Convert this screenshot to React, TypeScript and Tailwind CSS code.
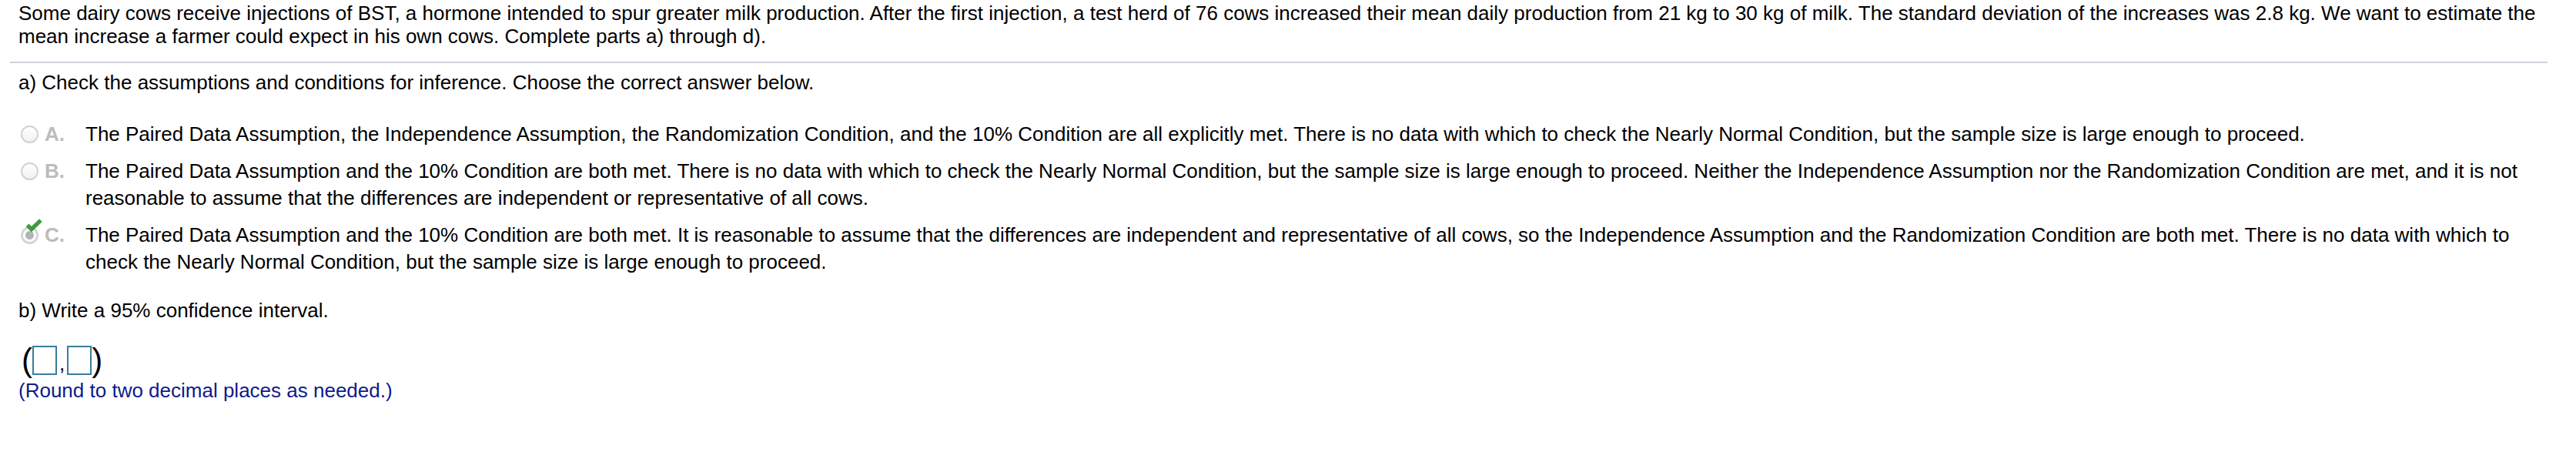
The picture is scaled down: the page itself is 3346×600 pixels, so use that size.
const options = [
  {
    letter: 'A.',
    text: 'The Paired Data Assumption, the Independence Assumption, the Randomization Condition, and the 10% Condition are all explicitly met. There is no data with which to check the Nearly Normal Condition, but the sample size is large enough to proceed.',
    selected: false,
  },
  {
    letter: 'B.',
    text: 'The Paired Data Assumption and the 10% Condition are both met. There is no data with which to check the Nearly Normal Condition, but the sample size is large enough to proceed. Neither the Independence Assumption nor the Randomization Condition are met, and it is not reasonable to assume that the differences are independent or representative of all cows.',
    selected: false,
  },
  {
    letter: 'C.',
    text: 'The Paired Data Assumption and the 10% Condition are both met. It is reasonable to assume that the differences are independent and representative of all cows, so the Independence Assumption and the Randomization Condition are both met. There is no data with which to check the Nearly Normal Condition, but the sample size is large enough to proceed.',
    selected: true,
  },
]

function Radio({ selected }: { selected: boolean }) {
  if (!selected) {
    return (
      <span className="block h-[23px] w-[23px] rounded-full border-2 border-[#d2d2d2] bg-gradient-to-b from-white to-[#f1f1f1]" />
    )
  }
  return (
    <span className="relative block h-[23px] w-[23px]">
      <span className="flex h-full w-full items-center justify-center rounded-full border-[3px] border-[#d6d6d6] bg-white">
        <span className="h-[11px] w-[11px] rounded-full bg-[#b4b4b4]" />
      </span>
      {/* green check over the radio */}
      <svg
        viewBox="0 0 20 17"
        className="absolute left-[7px] top-[-10px] h-[18px] w-[21px]"
      >
        <path
          d="M1.5 8 L6.5 13 L18 2"
          fill="none"
          stroke="#3f9b3f"
          strokeWidth="5"
          strokeLinejoin="miter"
        />
      </svg>
    </span>
  )
}

export default function App() {
  return (
    <div className="h-[600px] w-[3346px] overflow-hidden bg-white pt-[2px] font-['Liberation_Sans',Arial,sans-serif] text-[26px] text-black">
      <p className="pl-[24px] pr-[36px] leading-[30px]">
        Some dairy cows receive injections of BST, a hormone intended to spur greater milk production. After the first injection, a test herd of 76 cows increased their mean daily production from 21 kg to 30 kg of milk. The standard deviation of the increases was 2.8 kg. We want to estimate the mean increase a farmer could expect in his own cows. Complete parts a) through d).
      </p>
      <div className="ml-[13px] mr-[37px] mt-[18px] h-[2px] bg-[#cdd2db]" />

      <p className="mt-[10px] pl-[24px] leading-[30px]">
        a) Check the assumptions and conditions for inference. Choose the correct answer below.
      </p>

      <div className="mt-[35px] flex flex-col gap-[13px]">
        {options.map((o) => (
          <div key={o.letter} className="flex items-start leading-[35px]">
            <div className="flex h-[35px] w-[58px] shrink-0 items-center justify-end pr-[8px]">
              <Radio selected={o.selected} />
            </div>
            <span className="w-[53px] shrink-0 font-bold text-[#bcbcbc]">{o.letter}</span>
            <span className="flex-1 pr-[36px]">{o.text}</span>
          </div>
        ))}
      </div>

      <p className="mt-[30px] pl-[24px] leading-[30px]">b) Write a 95% confidence interval.</p>

      <div className="mt-[31px] flex h-[38px] items-center pl-[28px]">
        <span className="text-[42px] font-light leading-none">(</span>
        <span className="h-[38px] w-[32px] border-2 border-[#3b7c9c]" />
        <span className="self-end px-[3px] leading-[30px]">,</span>
        <span className="h-[38px] w-[32px] border-2 border-[#3b7c9c]" />
        <span className="text-[42px] font-light leading-none">)</span>
      </div>

      <p className="mt-[5px] pl-[24px] leading-[30px] text-[#0d1b8c]">
        (Round to two decimal places as needed.)
      </p>
    </div>
  )
}
